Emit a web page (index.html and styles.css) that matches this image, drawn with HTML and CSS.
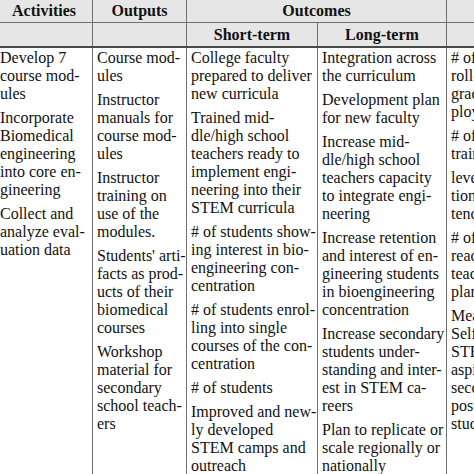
FILE: index.html
```html
<!DOCTYPE html>
<html>
<head>
<meta charset="utf-8">
<link rel="stylesheet" href="styles.css">
</head>
<body>
<div class="frame">
<table class="logic">
  <colgroup>
    <col class="c1"><col class="c2"><col class="c3"><col class="c4"><col class="c5">
  </colgroup>
  <thead>
    <tr class="h1">
      <th>Activities</th>
      <th>Outputs</th>
      <th colspan="2">Outcomes</th>
      <th>Impacts</th>
    </tr>
    <tr class="h2">
      <th></th>
      <th></th>
      <th>Short-term</th>
      <th>Long-term</th>
      <th></th>
    </tr>
  </thead>
  <tbody>
    <tr>
      <td>
        <p>Develop 7<br>course mod-<br>ules</p>
        <p>Incorporate<br>Biomedical<br>engineering<br>into core en-<br>gineering</p>
        <p>Collect and<br>analyze eval-<br>uation data</p>
      </td>
      <td>
        <p>Course mod-<br>ules</p>
        <p>Instructor<br>manuals for<br>course mod-<br>ules</p>
        <p>Instructor<br>training on<br>use of the<br>modules.</p>
        <p>Students' arti-<br>facts as prod-<br>ucts of their<br>biomedical<br>courses</p>
        <p>Workshop<br>material for<br>secondary<br>school teach-<br>ers</p>
      </td>
      <td>
        <p>College faculty<br>prepared to deliver<br>new curricula</p>
        <p>Trained mid-<br>dle/high school<br>teachers ready to<br>implement engi-<br>neering into their<br>STEM curricula</p>
        <p># of students show-<br>ing interest in bio-<br>engineering con-<br>centration</p>
        <p># of students enrol-<br>ling into single<br>courses of the con-<br>centration</p>
        <p># of students</p>
        <p>Improved and new-<br>ly developed<br>STEM camps and<br>outreach</p>
      </td>
      <td>
        <p>Integration across<br>the curriculum</p>
        <p>Development plan<br>for new faculty</p>
        <p>Increase mid-<br>dle/high school<br>teachers capacity<br>to integrate engi-<br>neering</p>
        <p>Increase retention<br>and interest of en-<br>gineering students<br>in bioengineering<br>concentration</p>
        <p>Increase secondary<br>students under-<br>standing and inter-<br>est in STEM ca-<br>reers</p>
        <p>Plan to replicate or<br>scale regionally or<br>nationally</p>
      </td>
      <td>
        <p># of students en-<br>rolled in and<br>graduated, em-<br>ployed</p>
        <p># of teachers<br>trained</p>
        <p>level of implementa-<br>tion and compe-<br>tency</p>
        <p># of students<br>reached through<br>teacher lesson<br>plans</p>
        <p>Measured by<br>Self-efficacy,<br>STEM interest,<br>aspirations of<br>secondary and<br>post-secondary<br>students</p>
      </td>
    </tr>
  </tbody>
</table>
</div>
</body>
</html>
```

FILE: styles.css
```css
html, body {
  margin: 0;
  padding: 0;
  background: #ffffff;
  overflow: hidden;
  width: 474px;
  height: 474px;
}

.frame {
  width: 474px;
  height: 474px;
  overflow: hidden;
}

.logic {
  margin-left: -5px;
  margin-top: -2px;
  border-collapse: collapse;
  table-layout: fixed;
  width: 612px;
  font-family: "Liberation Serif", "Times New Roman", serif;
  font-size: 16px;
  line-height: 18px;
  color: #111111;
}

.c1 { width: 97px; }
.c2 { width: 94px; }
.c3 { width: 131px; }
.c4 { width: 129px; }
.c5 { width: 161px; }

.logic th {
  background: #e6e6e6;
  font-weight: bold;
  text-align: center;
  height: 23px;
  padding: 0 4px;
  border: 1px solid #6f6f6f;
  white-space: nowrap;
  vertical-align: middle;
}

.logic .h2 th {
  border-bottom: 2px solid #4a4a4a;
}

.logic td {
  vertical-align: top;
  padding: 1px 4px 0 4px;
  border-left: 1px solid #6f6f6f;
  border-right: 1px solid #6f6f6f;
  height: 440px;
  white-space: nowrap;
}

.logic p {
  margin: 0 0 6px 0;
}
```
